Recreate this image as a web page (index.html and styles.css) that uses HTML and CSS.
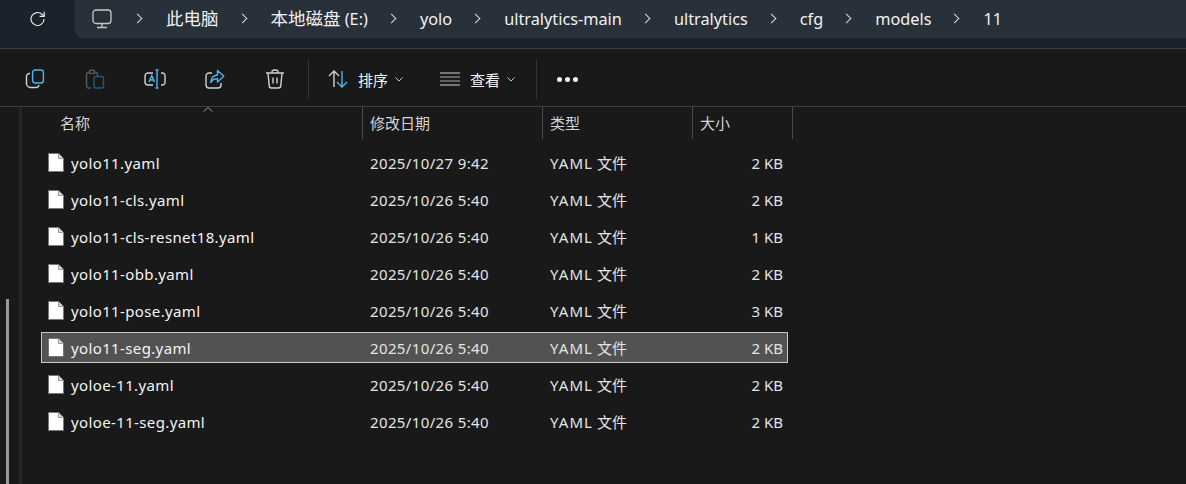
FILE: index.html

```html
<!DOCTYPE html>
<html lang="zh-CN">
<head>
    <meta charset="UTF-8">
    <title>11 - 文件资源管理器</title>
    <link rel="stylesheet" href="styles.css">
</head>
<body>
    <header class="address-row">
        <button class="refresh">
            <svg width="18" height="18" viewBox="0 0 18 18" fill="none" stroke="#e6e6e6" stroke-width="1.2"><path d="M15 9a6.5 6.5 0 1 1-2-4.700L15 6.200"/><path d="M15.200 1.800v4.600h-4.600"/></svg>
        </button>
        <nav class="breadcrumb">
            <svg class="pc-icon" width="20" height="20" viewBox="0 0 20 20" fill="none" stroke="#c8c8c8" stroke-width="1.3"><rect x="1" y="1" width="18" height="13.5" rx="3"/><path d="M10 15v3M5 18.500h10"/></svg>
            <span class="sep"></span><a class="crumb"><span class="cjk">此电脑</span></a>
            <span class="sep"></span><a class="crumb"><span class="cjk">本地磁盘</span> (E:)</a>
            <span class="sep"></span><a class="crumb">yolo</a>
            <span class="sep"></span><a class="crumb">ultralytics-main</a>
            <span class="sep"></span><a class="crumb">ultralytics</a>
            <span class="sep"></span><a class="crumb">cfg</a>
            <span class="sep"></span><a class="crumb">models</a>
            <span class="sep"></span><a class="crumb">11</a>
        </nav>
    </header>

    <div class="toolbar">
        <button class="tool">
            <svg width="20" height="20" viewBox="0 0 20 20" fill="none" stroke-width="1.4"><rect x="7.600" y="1" width="10.800" height="13" rx="2.500" stroke="#4cb4f0"/><path d="M5 4.500a3 3 0 0 0-3.500 3v7a4 4 0 0 0 4 4h5.500a3 3 0 0 0 3-2.500" stroke="#d0d0d0"/></svg>
        </button>
        <button class="tool">
            <svg width="20" height="20" viewBox="0 0 20 20" fill="none" stroke-width="1.4"><path d="M9 3.500h1.500a2 2 0 0 1 2 2v1.500M6 19H3.500a2 2 0 0 1-2-2V5.500a2 2 0 0 1 2-2H5" stroke="#5a5a5a"/><rect x="4.500" y="1.200" width="5" height="3.300" rx="1" stroke="#5a5a5a"/><rect x="9" y="7.500" width="9.500" height="11.500" rx="2" stroke="#1f5a7c"/></svg>
        </button>
        <button class="tool">
            <svg width="22" height="22" viewBox="0 0 22 22" fill="none" stroke-width="1.4"><path d="M9 5H4a3 3 0 0 0-3 3v6a3 3 0 0 0 3 3h5M17 5h1.500a2.500 2.500 0 0 1 2.500 2.500v7a2.500 2.500 0 0 1-2.500 2.500H17" stroke="#d0d0d0"/><path d="M11.500 2h3M11.500 20h3M13 2v18" stroke="#4cb4f0"/><path d="M5 14l2.800-6.500L10.500 14M5.900 12h3.800" stroke="#4cb4f0"/></svg>
        </button>
        <button class="tool">
            <svg width="20" height="20" viewBox="0 0 20 20" fill="none" stroke-width="1.4"><path d="M7 4H4a3 3 0 0 0-3 3v9a3 3 0 0 0 3 3h9a3 3 0 0 0 3-3v-2" stroke="#d0d0d0"/><path d="M12.500 1.500l6.300 5.800-6.300 5.700V9.800c-3 0-5.200 1-6.800 3.700.3-4 2.600-7 6.800-7.500z" stroke="#4cb4f0" stroke-linejoin="round"/></svg>
        </button>
        <button class="tool">
            <svg width="20" height="20" viewBox="0 0 20 20" fill="none" stroke="#d0d0d0" stroke-width="1.4"><path d="M1 4h18M7 4V3a2 2 0 0 1 2-2h2a2 2 0 0 1 2 2v1M3 4l1.200 12.500a2.500 2.500 0 0 0 2.500 2.500h6.600a2.500 2.500 0 0 0 2.500-2.500L17 4M8 8.500v6M12 8.500v6"/></svg>
        </button>
        <span class="divider first"></span>
        <button class="menu sort">
            <svg width="20" height="18" viewBox="0 0 20 18" fill="none" stroke-width="1.4"><path d="M6 17V1M1 6l5-5 5 5" stroke="#d0d0d0"/><path d="M14 1v16M9 12l5 5 5-5" stroke="#4cb4f0"/></svg>
            <span>排序</span>
            <svg class="caret" width="8" height="5" viewBox="0 0 8 5" fill="none" stroke="#c8c8c8"><path d="M.5.500 4 4 7.500.5"/></svg>
        </button>
        <button class="menu view">
            <svg width="20" height="14" viewBox="0 0 20 14" fill="none" stroke-width="1"><path d="M0 1h20" stroke="#d0d0d0"/><path d="M0 5h20M0 9h20" stroke="#a8a8a8"/><path d="M0 13h20" stroke="#d0d0d0"/></svg>
            <span>查看</span>
            <svg class="caret" width="8" height="5" viewBox="0 0 8 5" fill="none" stroke="#c8c8c8"><path d="M.5.500 4 4 7.500.5"/></svg>
        </button>
        <span class="divider"></span>
        <button class="more"><i></i><i></i><i></i></button>
    </div>

    <main class="content">
        <aside class="side"><div class="thumb"></div></aside>
        <section class="files">
            <div class="col-head">
                <div class="head-cell name">名称<svg class="sort-up" width="10" height="5" viewBox="0 0 10 5" fill="none" stroke="#9a9a9a"><path d="M.5 4.500 5 .5l4.500 4"/></svg></div>
                <div class="head-cell date">修改日期</div>
                <div class="head-cell type">类型</div>
                <div class="head-cell size">大小</div>
            </div>
            <div class="file-list" id="list"></div>
        </section>
    </main>

    <script>
        const files = [
            ["yolo11.yaml", "2025/10/27 9:42", "2 KB"],
            ["yolo11-cls.yaml", "2025/10/26 5:40", "2 KB"],
            ["yolo11-cls-resnet18.yaml", "2025/10/26 5:40", "1 KB"],
            ["yolo11-obb.yaml", "2025/10/26 5:40", "2 KB"],
            ["yolo11-pose.yaml", "2025/10/26 5:40", "3 KB"],
            ["yolo11-seg.yaml", "2025/10/26 5:40", "2 KB"],
            ["yoloe-11.yaml", "2025/10/26 5:40", "2 KB"],
            ["yoloe-11-seg.yaml", "2025/10/26 5:40", "2 KB"],
        ];
        const icon = '<svg class="file-icon" width="16" height="19" viewBox="0 0 16 19"><path d="M.5.500h10l5 5v13H.5z" fill="#fff" stroke="#777"/><path d="M10.500.500v5h5" fill="#d8d8d8" stroke="#999"/></svg>';

        document.getElementById("list").innerHTML = files.map((f, i) => `
            <div class="file-row${i === 5 ? " selected" : ""}">
                <div class="cell name">${icon}<span>${f[0]}</span></div>
                <div class="cell date">${f[1]}</div>
                <div class="cell type"><span class="latin">YAML</span> 文件</div>
                <div class="cell size">${f[2]}</div>
            </div>`).join("");
    </script>
</body>
</html>
```

FILE: styles.css

```css
html, body {
    margin: 0;
    padding: 0;
    height: 484px;
    overflow: hidden;
    background-color: #191919;
    color: #f2f2f2;
    font-family: "Noto Sans", "Noto Sans CJK SC", sans-serif;
    font-size: 15px;
}

button {
    background: none;
    border: 0;
    padding: 0;
    color: inherit;
    font: inherit;
}

svg {
    display: block;
    flex: none;
}

.address-row {
    display: flex;
    height: 48px;
    background-color: #1a232c;
    border-bottom: 1px solid #3e3f40;
}

.refresh {
    display: flex;
    width: 75px;
    height: 38px;
    padding-left: 29px;
    align-items: center;
}

.breadcrumb {
    display: flex;
    flex: 1;
    align-items: center;
    box-sizing: border-box;
    height: 38px;
    padding-left: 17px;
    padding-bottom: 1px;
    background-color: #28303a;
    border-bottom-left-radius: 8px;
    font-size: 16.3px;
}

.cjk { font-size: 17.5px; }

.sep {
    flex: none;
    width: 6px;
    height: 6px;
    border-top: 1.5px solid #d8d8d8;
    border-right: 1.5px solid #d8d8d8;
    transform: rotate(45deg);
}

.pc-icon { margin-right: 22px; }
.crumb { margin-left: 25px; margin-right: 20px; white-space: nowrap; line-height: 24px; }

.toolbar {
    display: flex;
    align-items: center;
    box-sizing: border-box;
    height: 58px;
    padding-top: 3px;
    border-bottom: 1px solid #3e3f40;
}

.tool {
    display: flex;
    justify-content: center;
    width: 60px;
}

.tool:first-child { margin-left: 5px; }

.divider {
    width: 1px;
    height: 40px;
    background-color: #333;
}

.divider.first { margin-left: 3px; }

.menu {
    display: flex;
    align-items: center;
    gap: 10px;
    margin-left: 19px;
    margin-right: 19px;
}

.menu.view { margin-left: 18px; margin-right: 21px; }
.caret { margin-left: -3px; }

.more {
    display: flex;
    gap: 3px;
    margin-left: 20px;
}

.more i {
    width: 5px;
    height: 5px;
    border-radius: 50%;
    background-color: #f2f2f2;
}

.content {
    display: flex;
    height: 377px;
}

.side {
    position: relative;
    width: 19px;
    border-right: 3px solid #242424;
}

.thumb {
    position: absolute;
    left: 6px;
    top: 192px;
    width: 3px;
    height: 185px;
    background-color: #9a9a9a;
}

.files {
    padding-left: 19px;
}

.col-head {
    display: flex;
    height: 32px;
    margin-bottom: 8px;
    color: #d4d4d4;
}

.head-cell {
    position: relative;
    padding-left: 7px;
    line-height: 32px;
    border-right: 1px solid #4a4a4a;
    box-sizing: border-box;
}

.head-cell.name { width: 322px; padding-left: 19px; }
.head-cell.date { width: 180px; }
.head-cell.type { width: 150px; }
.head-cell.size { width: 100px; }

.sort-up {
    position: absolute;
    left: 162px;
    top: 0;
}

.file-list {
    display: flex;
    flex-direction: column;
    gap: 6px;
}

.file-row {
    display: flex;
    box-sizing: border-box;
    width: 747px;
    height: 31px;
    align-items: center;
    border: 1px solid transparent;
}

.file-row.selected {
    background-color: #525252;
    border-color: #c9c9c9;
}

.cell { white-space: nowrap; color: #e4e4e4; }
.cell.name {
    display: flex;
    align-items: center;
    gap: 7px;
    width: 321px;
    padding-left: 6px;
    box-sizing: border-box;
    color: #f4f4f4;
    letter-spacing: .37px;
}
.cell.date { width: 180px; padding-left: 7px; box-sizing: border-box; letter-spacing: .37px; }
.cell.type { width: 150px; padding-left: 7px; box-sizing: border-box; }
.cell.type .latin { letter-spacing: 1.1px; }
.cell.size { width: 90px; text-align: right; }
```
